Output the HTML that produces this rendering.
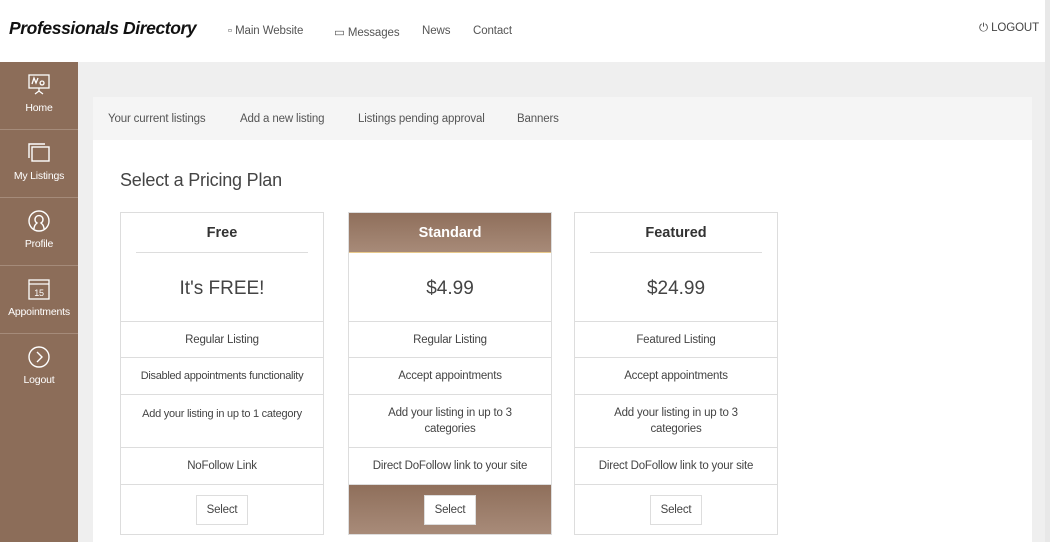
<!DOCTYPE html>
<html><head><style>
*{box-sizing:border-box;margin:0;padding:0}
body{width:1050px;height:542px;overflow:hidden;background:#fff;font-family:"Liberation Sans",sans-serif;color:#444;position:relative}
.top{position:absolute;left:0;top:0;width:1050px;height:62px;background:#fff}
.logo{position:absolute;left:9px;top:18px;font-size:17.5px;font-style:italic;font-weight:bold;color:#111;letter-spacing:-0.4px}
.nav{position:absolute;top:25px;font-size:11.5px;color:#555;letter-spacing:-0.1px}
.side{position:absolute;left:0;top:62px;width:78px;height:480px;background:#8c6d59}
.si{height:68px;border-bottom:1px solid #a58b7a;color:#fff;font-size:10.5px;text-align:center;padding-top:12px;letter-spacing:-0.2px}
.si svg{display:block;margin:0 auto 6px}
.main{position:absolute;left:78px;top:62px;width:967px;height:480px;background:#efefef}
.sb{position:absolute;left:1045px;top:0;width:5px;height:542px;background:#e8e8e8}
.panel{position:absolute;left:93px;top:97px;width:939px;height:445px;background:#fff}
.tabs{height:43px;background:#f5f5f5;font-size:11.5px;color:#555;letter-spacing:-0.15px}
.tabs span{position:absolute;top:16px}
h2{position:absolute;left:27px;top:73px;font-weight:normal;font-size:18px;color:#444;letter-spacing:-0.2px}
.card{position:absolute;top:115px;width:204px;border:1px solid #ddd;background:#fff;font-size:11.5px;text-align:center;color:#444;letter-spacing:-0.2px}
.hd{height:40px;line-height:40px;font-size:14.5px;font-weight:bold;color:#333;position:relative;letter-spacing:0}
.hd:after{content:"";position:absolute;left:15px;right:15px;bottom:0;border-bottom:1px solid #ddd}
.std .hd{background:linear-gradient(#8f6f5b,#a88b79);color:#fff}
.std .hd:after{left:0;right:0;border-bottom:1px solid #e8c98a}
.pr{height:69px;line-height:72px;font-size:19px;border-bottom:1px solid #ddd;letter-spacing:0}
.r{border-bottom:1px solid #ddd;display:flex;align-items:center;justify-content:center;line-height:16px;padding:0 6px}
.ft{height:49px;display:flex;align-items:center;justify-content:center}
.std .ft{background:linear-gradient(#8f6f5b,#a88b79)}
.btn{width:52px;height:30px;line-height:28px;border:1px solid #ddd;background:#fff;font-size:11.5px}
</style></head><body>
<div class="top">
<div class="logo">Professionals Directory</div>
<div class="nav" style="left:228px">&#9643; Main Website</div>
<div class="nav" style="left:334px">&#9645; Messages</div>
<div class="nav" style="left:422px">News</div>
<div class="nav" style="left:473px">Contact</div>
<div class="nav" style="left:979px;top:22px;color:#444">&#x23FB; LOGOUT</div>
</div>
<div class="side">
<div class="si"><svg width="24" height="22" viewBox="0 0 24 22" fill="none" stroke="#fff" stroke-width="1.3"><rect x="2" y="1" width="20" height="13"/><path d="M5 10l2-6 2 5 2-5M15 7a2 2 0 1 0 .1 0M12 14v3M8 20l4-3 4 3"/></svg>Home</div>
<div class="si"><svg width="24" height="22" viewBox="0 0 24 22" fill="none" stroke="#fff" stroke-width="1.4"><path d="M2 16V2h16"/><rect x="5" y="5" width="17" height="14"/></svg>My Listings</div>
<div class="si"><svg width="24" height="22" viewBox="0 0 24 22" fill="none" stroke="#fff" stroke-width="1.4"><circle cx="12" cy="11" r="10"/><path d="M7 19c0-4 2-5 3-6a4 4 0 1 1 4 0c1 1 3 2 3 6"/></svg>Profile</div>
<div class="si"><svg width="24" height="22" viewBox="0 0 24 22" fill="none" stroke="#fff" stroke-width="1.3"><rect x="2" y="2" width="20" height="19"/><path d="M2 6h20"/><text x="12" y="18" font-size="9" fill="#fff" stroke="none" text-anchor="middle" font-family="Liberation Sans">15</text></svg>Appointments</div>
<div class="si" style="border:none"><svg width="24" height="22" viewBox="0 0 24 22" fill="none" stroke="#fff" stroke-width="1.4"><circle cx="12" cy="11" r="10"/><path d="M10 6l5 5-5 5"/></svg>Logout</div>
</div>
<div class="main"></div>
<div class="sb"></div>
<div class="panel">
<div class="tabs"><span style="left:15px">Your current listings</span><span style="left:147px">Add a new listing</span><span style="left:265px">Listings pending approval</span><span style="left:424px">Banners</span></div>
<h2>Select a Pricing Plan</h2>
<div class="card" style="left:27px"><div class="hd">Free</div><div class="pr">It's FREE!</div>
<div class="r" style="height:36px">Regular Listing</div><div class="r" style="height:37px;font-size:11px;letter-spacing:-0.3px;padding:0 2px;white-space:nowrap">Disabled appointments functionality</div><div class="r" style="height:53px;align-items:flex-start;padding-top:11px;font-size:11px;letter-spacing:-0.25px;white-space:nowrap">Add your listing in up to 1 category</div><div class="r" style="height:37px">NoFollow Link</div><div class="ft"><div class="btn">Select</div></div></div>
<div class="card std" style="left:255px"><div class="hd">Standard</div><div class="pr">$4.99</div>
<div class="r" style="height:36px">Regular Listing</div><div class="r" style="height:37px">Accept appointments</div><div class="r" style="height:53px">Add your listing in up to 3<br>categories</div><div class="r" style="height:37px">Direct DoFollow link to your site</div><div class="ft"><div class="btn">Select</div></div></div>
<div class="card" style="left:481px"><div class="hd">Featured</div><div class="pr">$24.99</div>
<div class="r" style="height:36px">Featured Listing</div><div class="r" style="height:37px">Accept appointments</div><div class="r" style="height:53px">Add your listing in up to 3<br>categories</div><div class="r" style="height:37px">Direct DoFollow link to your site</div><div class="ft"><div class="btn">Select</div></div></div>
</div>
</body></html>
